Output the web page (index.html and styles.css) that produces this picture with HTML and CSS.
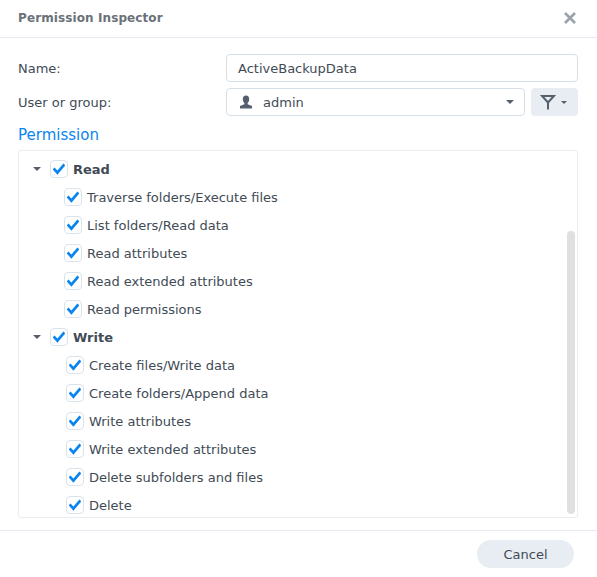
FILE: index.html
```html
<!DOCTYPE html>
<html lang="en">
<head>
    <meta charset="UTF-8">
    <title>Permission Inspector</title>
    <link rel="stylesheet" href="styles.css">
</head>
<body>
    <svg class="icon-defs" width="0" height="0">
        <symbol id="check" viewBox="0 0 12 12">
            <path d="M0.6 5.4 L4.4 9.6 L11.4 1.4" fill="none" stroke="#0a84f0" stroke-width="2.7"/>
        </symbol>
    </svg>

    <div class="dialog">
        <div class="header">
            <span class="title">Permission Inspector</span>
            <svg class="close-icon" width="12" height="12" viewBox="0 0 12 12">
                <path d="M1 1 L11 11 M11 1 L1 11" stroke="#9ba2a9" stroke-width="2.6"/>
            </svg>
        </div>

        <div class="content">
            <div class="form-row">
                <label class="form-label">Name:</label>
                <div class="text-field">ActiveBackupData</div>
            </div>
            <div class="form-row">
                <label class="form-label">User or group:</label>
                <div class="user-controls">
                    <div class="select-field">
                        <svg class="user-icon" width="14" height="14" viewBox="0 0 14 14">
                            <path d="M7 0.5 C9.2 0.5 10.2 2.2 10.2 4.2 C10.2 6 9.4 7.4 8.6 8 L8.6 9.2 L13 11 L13 13.5 L1 13.5 L1 11 L5.4 9.2 L5.4 8 C4.6 7.4 3.8 6 3.8 4.2 C3.8 2.2 4.8 0.5 7 0.5 Z" fill="#55606c"/>
                        </svg>
                        <span class="select-value">admin</span>
                        <span class="caret"></span>
                    </div>
                    <button class="filter-button">
                        <svg width="16" height="16" viewBox="0 0 16 16">
                            <path d="M2 2 L14 2 L8 8.5 Z M8 8 L8 15.5" fill="none" stroke="#55606c" stroke-width="2"/>
                        </svg>
                        <span class="caret caret-small"></span>
                    </button>
                </div>
            </div>

            <h2 class="section-title">Permission</h2>

            <div class="tree">
                <div class="tree-row parent-row">
                    <span class="caret tree-caret"></span>
                    <span class="checkbox"><svg width="12" height="12"><use href="#check"/></svg></span>
                    <span class="parent-label">Read</span>
                </div>
                <div class="tree-row child-row">
                    <span class="checkbox"><svg width="12" height="12"><use href="#check"/></svg></span>
                    <span>Traverse folders/Execute files</span>
                </div>
                <div class="tree-row child-row">
                    <span class="checkbox"><svg width="12" height="12"><use href="#check"/></svg></span>
                    <span>List folders/Read data</span>
                </div>
                <div class="tree-row child-row">
                    <span class="checkbox"><svg width="12" height="12"><use href="#check"/></svg></span>
                    <span>Read attributes</span>
                </div>
                <div class="tree-row child-row">
                    <span class="checkbox"><svg width="12" height="12"><use href="#check"/></svg></span>
                    <span>Read extended attributes</span>
                </div>
                <div class="tree-row child-row">
                    <span class="checkbox"><svg width="12" height="12"><use href="#check"/></svg></span>
                    <span>Read permissions</span>
                </div>
                <div class="tree-row parent-row">
                    <span class="caret tree-caret"></span>
                    <span class="checkbox"><svg width="12" height="12"><use href="#check"/></svg></span>
                    <span class="parent-label">Write</span>
                </div>
                <div class="tree-row child-row write-child">
                    <span class="checkbox"><svg width="12" height="12"><use href="#check"/></svg></span>
                    <span>Create files/Write data</span>
                </div>
                <div class="tree-row child-row write-child">
                    <span class="checkbox"><svg width="12" height="12"><use href="#check"/></svg></span>
                    <span>Create folders/Append data</span>
                </div>
                <div class="tree-row child-row write-child">
                    <span class="checkbox"><svg width="12" height="12"><use href="#check"/></svg></span>
                    <span>Write attributes</span>
                </div>
                <div class="tree-row child-row write-child">
                    <span class="checkbox"><svg width="12" height="12"><use href="#check"/></svg></span>
                    <span>Write extended attributes</span>
                </div>
                <div class="tree-row child-row write-child">
                    <span class="checkbox"><svg width="12" height="12"><use href="#check"/></svg></span>
                    <span>Delete subfolders and files</span>
                </div>
                <div class="tree-row child-row write-child">
                    <span class="checkbox"><svg width="12" height="12"><use href="#check"/></svg></span>
                    <span>Delete</span>
                </div>
                <div class="scrollbar"></div>
            </div>
        </div>

        <div class="footer">
            <button class="cancel-button">Cancel</button>
        </div>
    </div>
</body>
</html>
```

FILE: styles.css
```css
body {
    font-family: 'DejaVu Sans', sans-serif;
    font-size: 13px;
    color: #414b55;
    margin: 0;
    background: white;
}

.icon-defs {
    position: absolute;
}

.dialog {
    width: 597px;
    height: 577px;
    display: flex;
    flex-direction: column;
}

.header {
    height: 35px;
    border-bottom: 1px solid #e6ebf1;
    padding: 0 21px 2px 18px;
    display: flex;
    align-items: center;
    justify-content: space-between;
}

.title {
    font-weight: bold;
    font-size: 12px;
    letter-spacing: 0.1px;
    color: #6a7178;
}

.content {
    padding: 16px 19px 0 18px;
    flex: 1;
}

.form-row {
    display: flex;
    align-items: center;
    height: 28px;
    margin-bottom: 6px;
}

.form-label {
    width: 208px;
}

.text-field,
.select-field {
    height: 28px;
    box-sizing: border-box;
    border: 1px solid #d7e0e9;
    border-radius: 4px;
    display: flex;
    align-items: center;
}

.text-field {
    flex: 1;
    padding-left: 11px;
}

.user-controls {
    flex: 1;
    display: flex;
    gap: 6px;
}

.select-field {
    flex: 1;
    padding: 0 10px 0 12px;
}

.select-value {
    margin-left: 10px;
    flex: 1;
}

.caret {
    width: 0;
    height: 0;
    border-left: 4px solid transparent;
    border-right: 4px solid transparent;
    border-top: 4px solid #55606c;
}

.caret-small {
    border-left-width: 3px;
    border-right-width: 3px;
    border-top-width: 3px;
}

.filter-button {
    width: 47px;
    height: 28px;
    border: none;
    border-radius: 4px;
    background: #e8edf4;
    padding: 0 2px 0 0;
    display: flex;
    align-items: center;
    justify-content: center;
    gap: 5px;
}

.section-title {
    font-size: 15px;
    font-weight: normal;
    color: #0a84f0;
    margin: 0 0 1px;
    height: 27px;
    line-height: 27px;
}

.tree {
    position: relative;
    height: 368px;
    box-sizing: border-box;
    border: 1px solid #e9edf2;
    border-radius: 3px;
    padding-top: 4px;
    overflow: hidden;
}

.tree-row {
    height: 28px;
    display: flex;
    align-items: center;
}

.parent-row {
    padding-left: 14px;
}

.child-row {
    padding-left: 45px;
}

.write-child {
    padding-left: 47px;
}

.tree-caret {
    margin-right: 9px;
}

.parent-label {
    font-weight: bold;
}

.checkbox {
    width: 18px;
    height: 18px;
    box-sizing: border-box;
    border: 1px solid #dbe3ea;
    border-radius: 4px;
    margin-right: 5px;
    display: flex;
    align-items: center;
    justify-content: center;
    flex-shrink: 0;
}

.scrollbar {
    position: absolute;
    top: 80px;
    right: 2px;
    width: 8px;
    height: 283px;
    background: #e0e0e0;
    border-radius: 4px;
}

.footer {
    height: 47px;
    box-sizing: border-box;
    flex-shrink: 0;
    border-top: 1px solid #e6ebf1;
    padding: 9px 23px 0 0;
    display: flex;
    justify-content: flex-end;
    align-items: flex-start;
}

.cancel-button {
    width: 97px;
    height: 28px;
    border: none;
    border-radius: 14px;
    background: #e8edf4;
    font-family: 'DejaVu Sans', sans-serif;
    font-size: 13px;
    color: #414b55;
}
```
